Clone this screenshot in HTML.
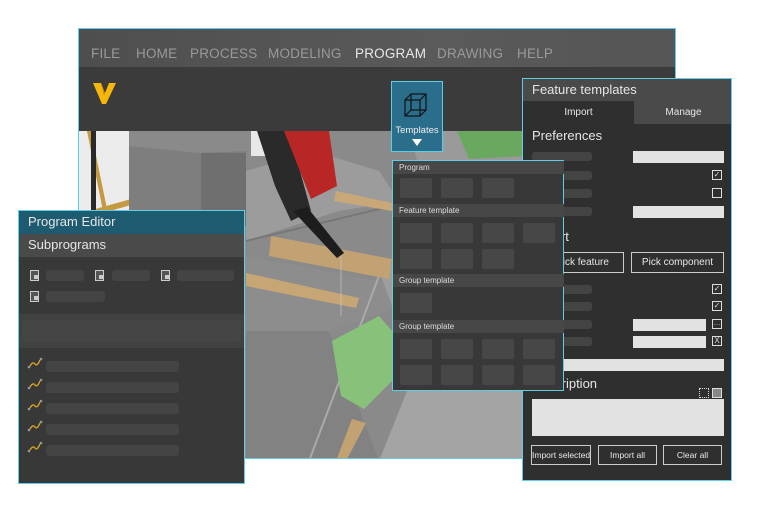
<!DOCTYPE html>
<html><head><meta charset="utf-8"><style>
*{box-sizing:border-box;margin:0;padding:0}
body{width:768px;height:522px;background:#fff;position:relative;overflow:hidden;font-family:"Liberation Sans",sans-serif;color:#e6e6e6}
.abs{position:absolute}
#main{left:78px;top:28px;width:598px;height:431px;border:1px solid #5ccfe6;background:#3a3a3a;overflow:hidden}
#menu{left:0;top:0;width:598px;height:38px;background:linear-gradient(90deg,#4e4e4e,#5a5a5a 60%,#555);font-size:13.5px;color:#9a9a9a;letter-spacing:.2px}
#menu span{position:absolute;top:17px}
#tool{left:0;top:38px;width:598px;height:64px;background:#3b3b3b}
#vp{left:0;top:102px;width:598px;height:330px}
.bar{position:absolute;background:#444;border-radius:3px;height:9px}
.inp{position:absolute;background:#e2e2e2;height:12px}
.cb{position:absolute;width:10px;height:10px;border:1px solid #ddd;font-size:8px;line-height:8px;text-align:center;color:#ddd}
.btn{position:absolute;border:1px solid #ccc;font-size:10px;text-align:center;color:#e8e8e8}
.hd{position:absolute;left:0;width:171px;height:13px;background:#474747;font-size:8px;padding:2px 6px;color:#ddd}
.tl{position:absolute;width:32px;height:20px;background:#474747;border-radius:2px}
.doc{position:absolute;width:9px;height:11px;border:1px solid #ccc;background:#555}
.doc:after{content:"";position:absolute;right:0;bottom:1px;width:4px;height:4px;background:#ccc}
</style></head><body>
<div id="main" class="abs">
 <div id="menu" class="abs">
  <span style="left:12px">FILE</span><span style="left:57px">HOME</span><span style="left:111px">PROCESS</span><span style="left:189px">MODELING</span><span style="left:276px;color:#e8e8e8">PROGRAM</span><span style="left:358px">DRAWING</span><span style="left:438px">HELP</span>
 </div>
 <div id="tool" class="abs">
  <svg class="abs" style="left:14px;top:16px" width="24" height="22"><polygon points="0,0 8,0 12,10 16,0 23,0 13,21 9,21" fill="#f5b80a"/><polygon points="8,0 12,10 11,13" fill="#c88c00"/></svg>
 </div>
 <div id="vp" class="abs">
  <svg width="598" height="330" viewBox="0 0 598 330">
   <rect width="598" height="330" fill="#8e8e8e"/>
   <rect x="0" y="0" width="52" height="95" fill="#ececec"/>
   <polygon points="8,0 12,0 28,78 24,80" fill="#c49a40"/>
   <polygon points="2,82 52,68 52,74 2,88" fill="#c49a40"/>
   <rect x="12" y="0" width="5" height="95" fill="#2a2a2a"/>
   <rect x="50" y="0" width="120" height="95" fill="#7e7e7e"/>
   <polygon points="50,0 170,0 170,20 120,22 50,15" fill="#8a8a8a"/>
   <rect x="122" y="22" width="48" height="73" fill="#6f6f6f"/>
   <polygon points="167,0 445,0 445,330 167,330" fill="#8a8a8a"/>
   <polygon points="167,40 235,20 300,40 320,70 260,80 167,110" fill="#9c9c9c"/>
   <polygon points="167,125 300,150 340,170 250,200 167,200" fill="#8d8d8d"/>
   <polygon points="167,200 250,200 300,330 167,330" fill="#828282"/>
   <polygon points="330,0 445,0 445,70 360,110" fill="#9a9a9a"/>
   <polygon points="300,140 445,70 445,230 360,300" fill="#9e9e9e"/>
   <polygon points="340,230 445,200 445,330 300,330" fill="#a4a4a4"/>
   <line x1="167" y1="110" x2="313" y2="75" stroke="#777" stroke-width="2"/>
   <line x1="230" y1="330" x2="300" y2="145" stroke="#aaa" stroke-width="2"/>
   <polygon points="257,60 313,72 313,80 255,70" fill="#c8a878"/>
   <polygon points="192,105 313,128 310,148 190,125" fill="#c2a272"/>
   <polygon points="167,142 280,167 277,177 167,155" fill="#c7a676"/>
   <polygon points="253,210 300,185 313,200 313,250 285,278 262,265" fill="#88c27a"/>
   <polygon points="273,288 287,292 267,330 257,330" fill="#c2a272"/>
   <rect x="172" y="0" width="20" height="25" fill="#e8e8e8"/>
   <polygon points="178,0 210,0 232,80 212,90 196,55" fill="#2a2a2a"/>
   <polygon points="205,0 250,0 258,55 232,68" fill="#b82626"/>
   <polygon points="214,80 228,76 265,122 258,127" fill="#1d1d1d"/>
   <line x1="262" y1="125" x2="262" y2="185" stroke="#ccc" stroke-width=".6"/>
   <polygon points="378,0 445,0 445,25 390,28" fill="#6aa860"/>
  </svg>
 </div>
</div>
<!-- templates button -->
<div class="abs" style="left:391px;top:81px;width:52px;height:71px;background:#2a6e8c;border:1px solid #5ccfe6">
 <svg class="abs" style="left:12px;top:11px" width="24" height="26"><g fill="none" stroke="#111" stroke-width="1.2"><rect x="1" y="7" width="15" height="16"/><rect x="7" y="1" width="15" height="16"/><line x1="1" y1="7" x2="7" y2="1"/><line x1="16" y1="7" x2="22" y2="1"/><line x1="1" y1="23" x2="7" y2="17"/><line x1="16" y1="23" x2="22" y2="17"/></g></svg>
 <div class="abs" style="left:0;top:43px;width:50px;text-align:center;font-size:9.5px;color:#eee">Templates</div>
 <div class="abs" style="left:20px;top:57px;width:0;height:0;border-left:5px solid transparent;border-right:5px solid transparent;border-top:7px solid #fff"></div>
</div>
<!-- feature templates panel -->
<div class="abs" style="left:522px;top:78px;width:210px;height:403px;background:#2f2f2f;border:1px solid #5ccfe6;overflow:hidden">
 <div class="abs" style="left:0;top:0;width:210px;height:22px;background:#4a4a4a;font-size:13px;padding:3px 9px">Feature templates</div>
 <div class="abs" style="left:0;top:22px;width:111px;height:23px;background:#2f2f2f;font-size:10px;text-align:center;padding-top:6px">Import</div>
 <div class="abs" style="left:111px;top:22px;width:99px;height:23px;background:#4a4a4a;font-size:10px;text-align:center;padding-top:6px">Manage</div>
 <div class="abs" style="left:9px;top:49px;font-size:13px">Preferences</div>
 <div class="bar" style="left:9px;top:73px;width:60px"></div><div class="inp" style="left:110px;top:72px;width:91px"></div>
 <div class="bar" style="left:9px;top:92px;width:60px"></div><div class="cb" style="left:189px;top:91px">✓</div>
 <div class="bar" style="left:9px;top:110px;width:60px"></div><div class="cb" style="left:189px;top:109px"></div>
 <div class="bar" style="left:9px;top:128px;width:60px"></div><div class="inp" style="left:110px;top:127px;width:91px"></div>
 <div class="abs" style="left:9px;top:150px;font-size:13px">Import</div>
 <div class="btn" style="left:18px;top:173px;width:83px;height:21px;padding-top:4px">Pick feature</div>
 <div class="btn" style="left:108px;top:173px;width:93px;height:21px;padding-top:4px">Pick component</div>
 <div class="bar" style="left:9px;top:206px;width:60px"></div><div class="cb" style="left:189px;top:205px">✓</div>
 <div class="bar" style="left:9px;top:223px;width:60px"></div><div class="cb" style="left:189px;top:222px">✓</div>
 <div class="bar" style="left:9px;top:241px;width:60px"></div><div class="inp" style="left:110px;top:240px;width:73px"></div><div class="cb" style="left:189px;top:240px;font-size:7px">…</div>
 <div class="bar" style="left:9px;top:258px;width:60px"></div><div class="inp" style="left:110px;top:257px;width:73px"></div><div class="cb" style="left:189px;top:257px;font-size:8px">X</div>
 <div class="inp" style="left:9px;top:280px;width:192px"></div>
 <div class="abs" style="left:9px;top:297px;font-size:13px">Description</div>
 <div class="cb" style="left:176px;top:309px;border-style:dotted"></div><div class="cb" style="left:189px;top:309px;background:#888"></div>
 <div class="abs" style="left:9px;top:320px;width:192px;height:37px;background:#e2e2e2"></div>
 <div class="btn" style="left:8px;top:366px;width:60px;height:20px;padding-top:4px;font-size:8.5px;white-space:nowrap;overflow:hidden">Import selected</div>
 <div class="btn" style="left:75px;top:366px;width:59px;height:20px;padding-top:4px;font-size:8.5px">Import all</div>
 <div class="btn" style="left:140px;top:366px;width:59px;height:20px;padding-top:4px;font-size:8.5px">Clear all</div>
</div>
<!-- dropdown -->
<div class="abs" style="left:392px;top:160px;width:172px;height:231px;background:#383838;border:1px solid #5ccfe6">
 <div class="hd" style="top:0">Program</div>
 <div class="tl" style="left:7px;top:17px"></div><div class="tl" style="left:48px;top:17px"></div><div class="tl" style="left:89px;top:17px"></div>
 <div class="hd" style="top:43px">Feature template</div>
 <div class="tl" style="left:7px;top:62px"></div><div class="tl" style="left:48px;top:62px"></div><div class="tl" style="left:89px;top:62px"></div><div class="tl" style="left:130px;top:62px"></div>
 <div class="tl" style="left:7px;top:88px"></div><div class="tl" style="left:48px;top:88px"></div><div class="tl" style="left:89px;top:88px"></div>
 <div class="hd" style="top:113px">Group template</div>
 <div class="tl" style="left:7px;top:132px"></div>
 <div class="hd" style="top:159px">Group template</div>
 <div class="tl" style="left:7px;top:178px"></div><div class="tl" style="left:48px;top:178px"></div><div class="tl" style="left:89px;top:178px"></div><div class="tl" style="left:130px;top:178px"></div>
 <div class="tl" style="left:7px;top:204px"></div><div class="tl" style="left:48px;top:204px"></div><div class="tl" style="left:89px;top:204px"></div><div class="tl" style="left:130px;top:204px"></div>
</div>
<!-- program editor -->
<div class="abs" style="left:18px;top:210px;width:227px;height:274px;background:#383838;border:1px solid #5ccfe6;overflow:hidden">
 <div class="abs" style="left:0;top:0;width:227px;height:23px;background:#1f5b70;font-size:13px;padding:3px 9px">Program Editor</div>
 <div class="abs" style="left:0;top:23px;width:227px;height:23px;background:#4a4a4a;font-size:13px;padding:3px 9px">Subprograms</div>
 <div class="doc" style="left:11px;top:59px"></div><div class="bar" style="left:27px;top:59px;width:38px;height:11px"></div>
 <div class="doc" style="left:76px;top:59px"></div><div class="bar" style="left:93px;top:59px;width:38px;height:11px"></div>
 <div class="doc" style="left:142px;top:59px"></div><div class="bar" style="left:158px;top:59px;width:57px;height:11px"></div>
 <div class="doc" style="left:11px;top:80px"></div><div class="bar" style="left:27px;top:80px;width:59px;height:11px"></div>
 <div class="abs" style="left:0;top:103px;width:227px;height:34px;background:#414141"></div>
 <div class="abs" style="left:3px;top:109px;width:219px;height:22px;background:#454545;border-radius:3px"></div>
 <svg class="abs" style="left:8px;top:146px" width="16" height="100"><g fill="none" stroke="#e0a820" stroke-width="1.3">
  <path d="M3 9 Q6 4 8 7 T13 3"/><path d="M3 30 Q6 25 8 28 T13 24"/><path d="M3 51 Q6 46 8 49 T13 45"/><path d="M3 72 Q6 67 8 70 T13 66"/><path d="M3 93 Q6 88 8 91 T13 87"/></g>
  <g fill="#999"><circle cx="2" cy="10" r="1.3"/><circle cx="14" cy="2" r="1.3"/><circle cx="2" cy="31" r="1.3"/><circle cx="14" cy="23" r="1.3"/><circle cx="2" cy="52" r="1.3"/><circle cx="14" cy="44" r="1.3"/><circle cx="2" cy="73" r="1.3"/><circle cx="14" cy="65" r="1.3"/><circle cx="2" cy="94" r="1.3"/><circle cx="14" cy="86" r="1.3"/></g></svg>
 <div class="bar" style="left:27px;top:150px;width:133px;height:11px"></div>
 <div class="bar" style="left:27px;top:171px;width:133px;height:11px"></div>
 <div class="bar" style="left:27px;top:192px;width:133px;height:11px"></div>
 <div class="bar" style="left:27px;top:213px;width:133px;height:11px"></div>
 <div class="bar" style="left:27px;top:234px;width:133px;height:11px"></div>
</div>
</body></html>
